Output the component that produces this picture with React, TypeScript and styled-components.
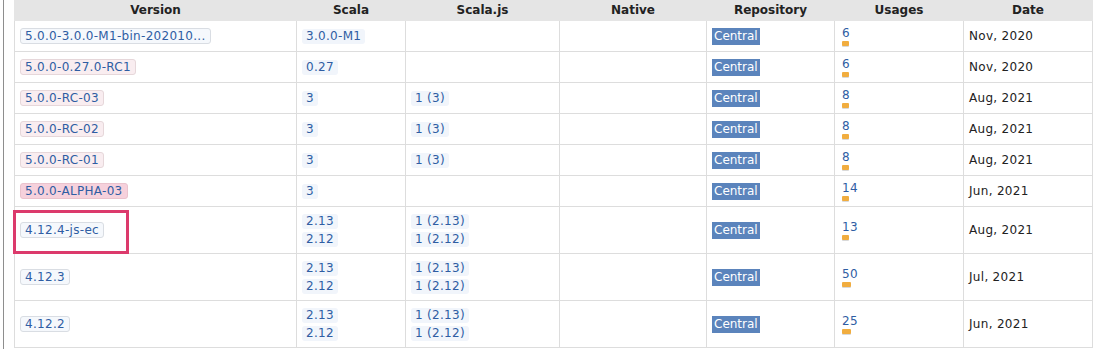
import React from 'react';
import styled, {createGlobalStyle, css} from 'styled-components';

const GlobalStyle = createGlobalStyle`
  html, body {
    margin: 0;
    padding: 0;
    background: #fff;
  }
  body {
    font-family: "DejaVu Sans", Verdana, sans-serif;
    font-size: 12px;
    color: #222;
  }
`;

type Kind = 'release' | 'rc' | 'alpha';

type VersionRow = {
    version:string,
    kind:Kind,
    scala:string[],
    scalaJs:string[],
    usages:number,
    bar:number,
    date:string,
    marked?:boolean
};

const rows:VersionRow[] = [
    {version: '5.0.0-3.0.0-M1-bin-202010...', kind: 'release', scala: ['3.0.0-M1'], scalaJs: [], usages: 6, bar: 7, date: 'Nov, 2020'},
    {version: '5.0.0-0.27.0-RC1', kind: 'rc', scala: ['0.27'], scalaJs: [], usages: 6, bar: 7, date: 'Nov, 2020'},
    {version: '5.0.0-RC-03', kind: 'rc', scala: ['3'], scalaJs: ['1 (3)'], usages: 8, bar: 7, date: 'Aug, 2021'},
    {version: '5.0.0-RC-02', kind: 'rc', scala: ['3'], scalaJs: ['1 (3)'], usages: 8, bar: 7, date: 'Aug, 2021'},
    {version: '5.0.0-RC-01', kind: 'rc', scala: ['3'], scalaJs: ['1 (3)'], usages: 8, bar: 7, date: 'Aug, 2021'},
    {version: '5.0.0-ALPHA-03', kind: 'alpha', scala: ['3'], scalaJs: [], usages: 14, bar: 7, date: 'Jun, 2021'},
    {version: '4.12.4-js-ec', kind: 'release', scala: ['2.13', '2.12'], scalaJs: ['1 (2.13)', '1 (2.12)'], usages: 13, bar: 7, date: 'Aug, 2021', marked: true},
    {version: '4.12.3', kind: 'release', scala: ['2.13', '2.12'], scalaJs: ['1 (2.13)', '1 (2.12)'], usages: 50, bar: 9, date: 'Jul, 2021'},
    {version: '4.12.2', kind: 'release', scala: ['2.13', '2.12'], scalaJs: ['1 (2.13)', '1 (2.12)'], usages: 25, bar: 9, date: 'Jun, 2021'},
];

const columns = [
    {title: 'Version', width: 282},
    {title: 'Scala', width: 109},
    {title: 'Scala.js', width: 154},
    {title: 'Native', width: 147},
    {title: 'Repository', width: 128},
    {title: 'Usages', width: 129},
    {title: 'Date', width: 129},
];

const LINK = '#2f5da3';

const Page = styled.div`
  padding-left: 3px;
`;

const Frame = styled.div`
  border-left: 1px solid #8e8e8e;
  padding-left: 10px;
  min-height: 349px;
  box-sizing: border-box;
`;

const Table = styled.table`
  border-collapse: collapse;
  table-layout: fixed;
  width: 1079px;
`;

const Th = styled.th`
  height: 19px;
  padding: 0 0 1px;
  background: #e5e5e5;
  font-weight: bold;
  font-size: 12px;
  color: #222;
  text-align: center;
  line-height: 14px;
  border: 1px solid #e5e5e5;
  border-top: none;
`;

const Td = styled.td<{$tall:boolean}>`
  position: relative;
  border: 1px solid #dddddd;
  padding: 0 5px;
  height: ${p => (p.$tall ? 46 : 30)}px;
  vertical-align: middle;
  white-space: nowrap;
  letter-spacing: 0.3px;
`;

const kindStyles = {
    release: css`background: #f5f8fc; border-color: #d9dde3;`,
    rc: css`background: #f9edf0; border-color: #e6d7da;`,
    alpha: css`background: #f6d1dc; border-color: #eac3cd;`,
};

const VersionTag = styled.a<{$kind:Kind}>`
  display: inline-block;
  padding: 0 4px;
  line-height: 14px;
  border: 1px solid;
  border-radius: 3px;
  color: ${LINK};
  text-decoration: none;
  ${p => kindStyles[p.$kind]}
`;

const Stack = styled.div`
  display: flex;
  flex-direction: column;
  align-items: flex-start;
  gap: 3px;
`;

const ScalaTag = styled.a`
  display: inline-block;
  padding: 0 4px;
  line-height: 15px;
  border-radius: 3px;
  background: #f1f5fb;
  color: ${LINK};
  text-decoration: none;
`;

const RepoLabel = styled.span`
  display: inline-block;
  padding: 0 2px;
  line-height: 17px;
  background: #5b84bc;
  color: #fff;
  letter-spacing: 0;
`;

const Usage = styled.div`
  display: flex;
  flex-direction: column;
  align-items: flex-start;
  padding-left: 2px;
`;

const UsageLink = styled.a`
  color: ${LINK};
  line-height: 14px;
  text-decoration: none;
`;

const UsageBar = styled.span`
  display: block;
  height: 5px;
  margin-top: 1px;
  background: #f1ad3f;
  border-radius: 1px;
  box-shadow: 0 1px 0 #d9d9d9;
`;

const DateText = styled.span`
  color: #222;
`;

const Marker = styled.div`
  position: absolute;
  left: -2px;
  top: 3px;
  width: 116px;
  height: 44px;
  box-sizing: border-box;
  border: 3px solid #dc3a6c;
  pointer-events: none;
`;

export default function App() {
    return (
        <Page>
            <GlobalStyle/>
            <Frame>
                <Table>
                    <colgroup>
                        {columns.map(c => <col key={c.title} style={{width: c.width}}/>)}
                    </colgroup>
                    <thead>
                        <tr>
                            {columns.map(c => <Th key={c.title}>{c.title}</Th>)}
                        </tr>
                    </thead>
                    <tbody>
                        {rows.map(r => {
                            const tall = r.scala.length > 1;
                            return (
                                <tr key={r.version}>
                                    <Td $tall={tall}>
                                        <VersionTag $kind={r.kind}>{r.version}</VersionTag>
                                        {r.marked && <Marker/>}
                                    </Td>
                                    <Td $tall={tall}>
                                        <Stack>
                                            {r.scala.map(s => <ScalaTag key={s}>{s}</ScalaTag>)}
                                        </Stack>
                                    </Td>
                                    <Td $tall={tall}>
                                        <Stack>
                                            {r.scalaJs.map(s => <ScalaTag key={s}>{s}</ScalaTag>)}
                                        </Stack>
                                    </Td>
                                    <Td $tall={tall}/>
                                    <Td $tall={tall}>
                                        <RepoLabel>Central</RepoLabel>
                                    </Td>
                                    <Td $tall={tall}>
                                        <Usage>
                                            <UsageLink>{r.usages}</UsageLink>
                                            <UsageBar style={{width: r.bar}}/>
                                        </Usage>
                                    </Td>
                                    <Td $tall={tall}>
                                        <DateText>{r.date}</DateText>
                                    </Td>
                                </tr>
                            );
                        })}
                    </tbody>
                </Table>
            </Frame>
        </Page>
    );
}
